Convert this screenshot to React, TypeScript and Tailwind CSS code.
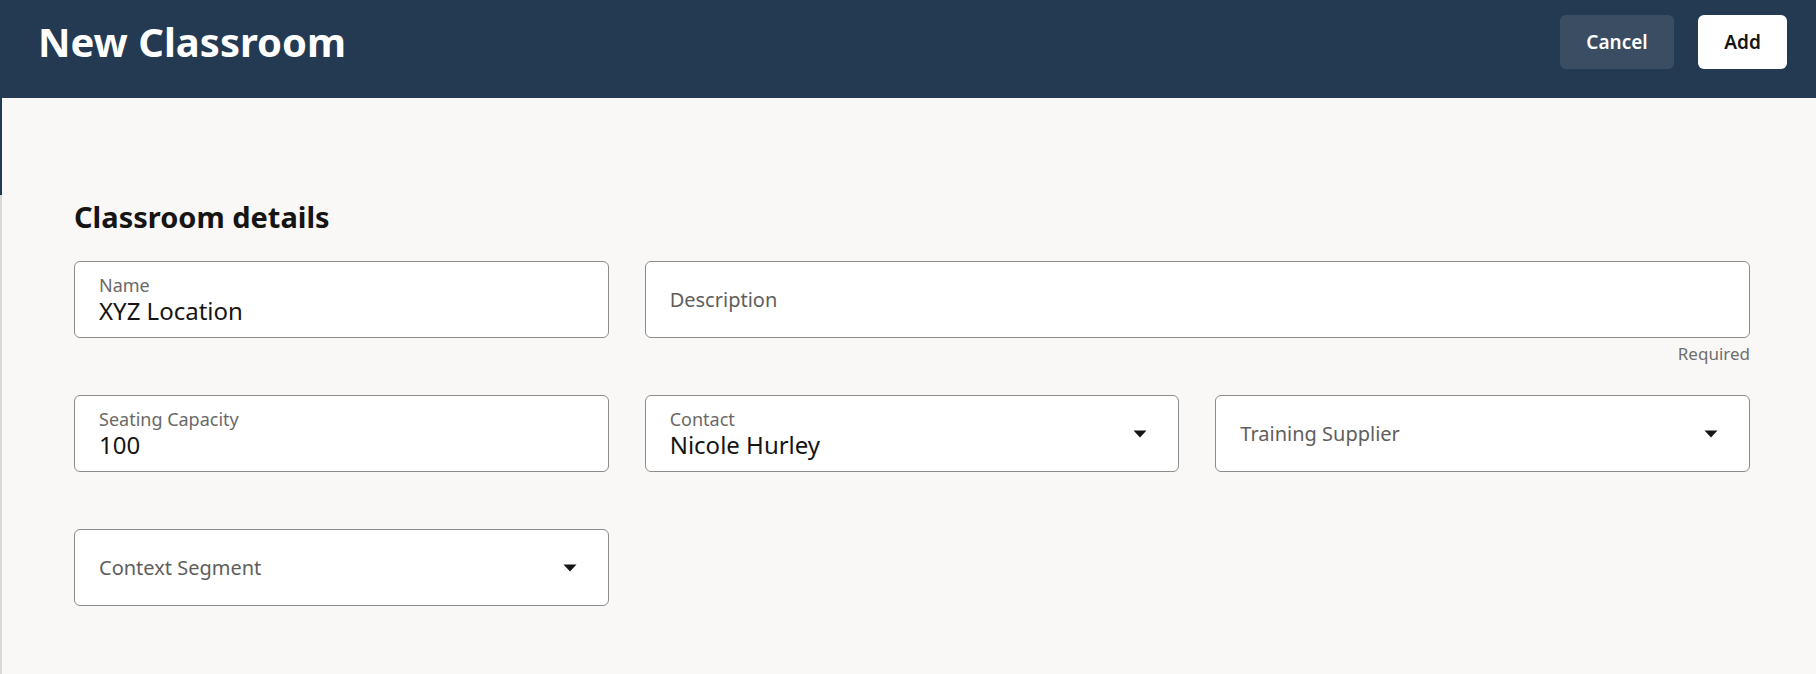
import React from "react";

const Caret: React.FC = () => (
  <svg width="14" height="8" viewBox="0 0 14 8" className="shrink-0">
    <path d="M0.5 0.5 H13.5 L7 7.5 Z" fill="#161513" />
  </svg>
);

interface FieldProps {
  label: string;
  value?: string;
  select?: boolean;
  helper?: string;
  className?: string;
}

const Field: React.FC<FieldProps> = ({ label, value, select, helper, className }) => (
  <div className={className}>
    <div className="h-[77px] bg-white border border-[#8d8c8a] rounded-[6px] flex items-center pl-[24px] pr-[31px]">
      {value ? (
        <div className="flex-1 flex flex-col h-full pt-[13px]">
          <span className="text-[18px] leading-[21px] text-[#6a6967]">{label}</span>
          <span className="text-[24px] leading-[28px] mt-[1px] text-[#161513]">{value}</span>
        </div>
      ) : (
        <span className="flex-1 text-[20px] leading-[28px] text-[#5f5e5c]">{label}</span>
      )}
      {select && <Caret />}
    </div>
    {/* helper row, keeps every row the same height */}
    <div className="h-[27px] pt-[6px] text-right text-[17px] leading-[20px] text-[#6f6e6c]">
      {helper}
    </div>
  </div>
);

export default function App() {
  return (
    <div className="min-h-screen w-full bg-[#f9f8f6] font-['Noto_Sans',sans-serif]">
      {/* Header */}
      <header className="h-[98px] bg-[#243a52] flex items-start justify-between pl-[38px] pr-[29px] pt-[15px]">
        <h1 className="text-white text-[40px] leading-[54px] font-bold">New Classroom</h1>
        <div className="flex gap-[24px]">
          <button className="w-[114px] h-[54px] rounded-[6px] bg-[#3a4d63] text-white text-[19px] font-semibold">
            Cancel
          </button>
          <button className="w-[89px] h-[54px] rounded-[6px] bg-white text-[#161513] text-[19px] font-semibold">
            Add
          </button>
        </div>
      </header>

      <div className="flex min-h-[576px]">
        {/* left rail */}
        <div className="w-[2px] flex flex-col">
          <div className="h-[97px] bg-[#243a52]" />
          <div className="flex-1 bg-[#d9d8d6]" />
        </div>

        <main className="flex-1 pl-[72px] pr-[66px] pt-[101px]">
          <h2 className="text-[29px] leading-[36px] font-bold text-[#161513] mb-[26px]">
            Classroom details
          </h2>
          <div className="grid grid-cols-3 gap-x-[36px] gap-y-[30px]">
            <Field label="Name" value="XYZ Location" />
            <Field label="Description" helper="Required" className="col-span-2" />
            <Field label="Seating Capacity" value="100" />
            <Field label="Contact" value="Nicole Hurley" select />
            <Field label="Training Supplier" select />
            <Field label="Context Segment" select />
          </div>
        </main>
      </div>
    </div>
  );
}
